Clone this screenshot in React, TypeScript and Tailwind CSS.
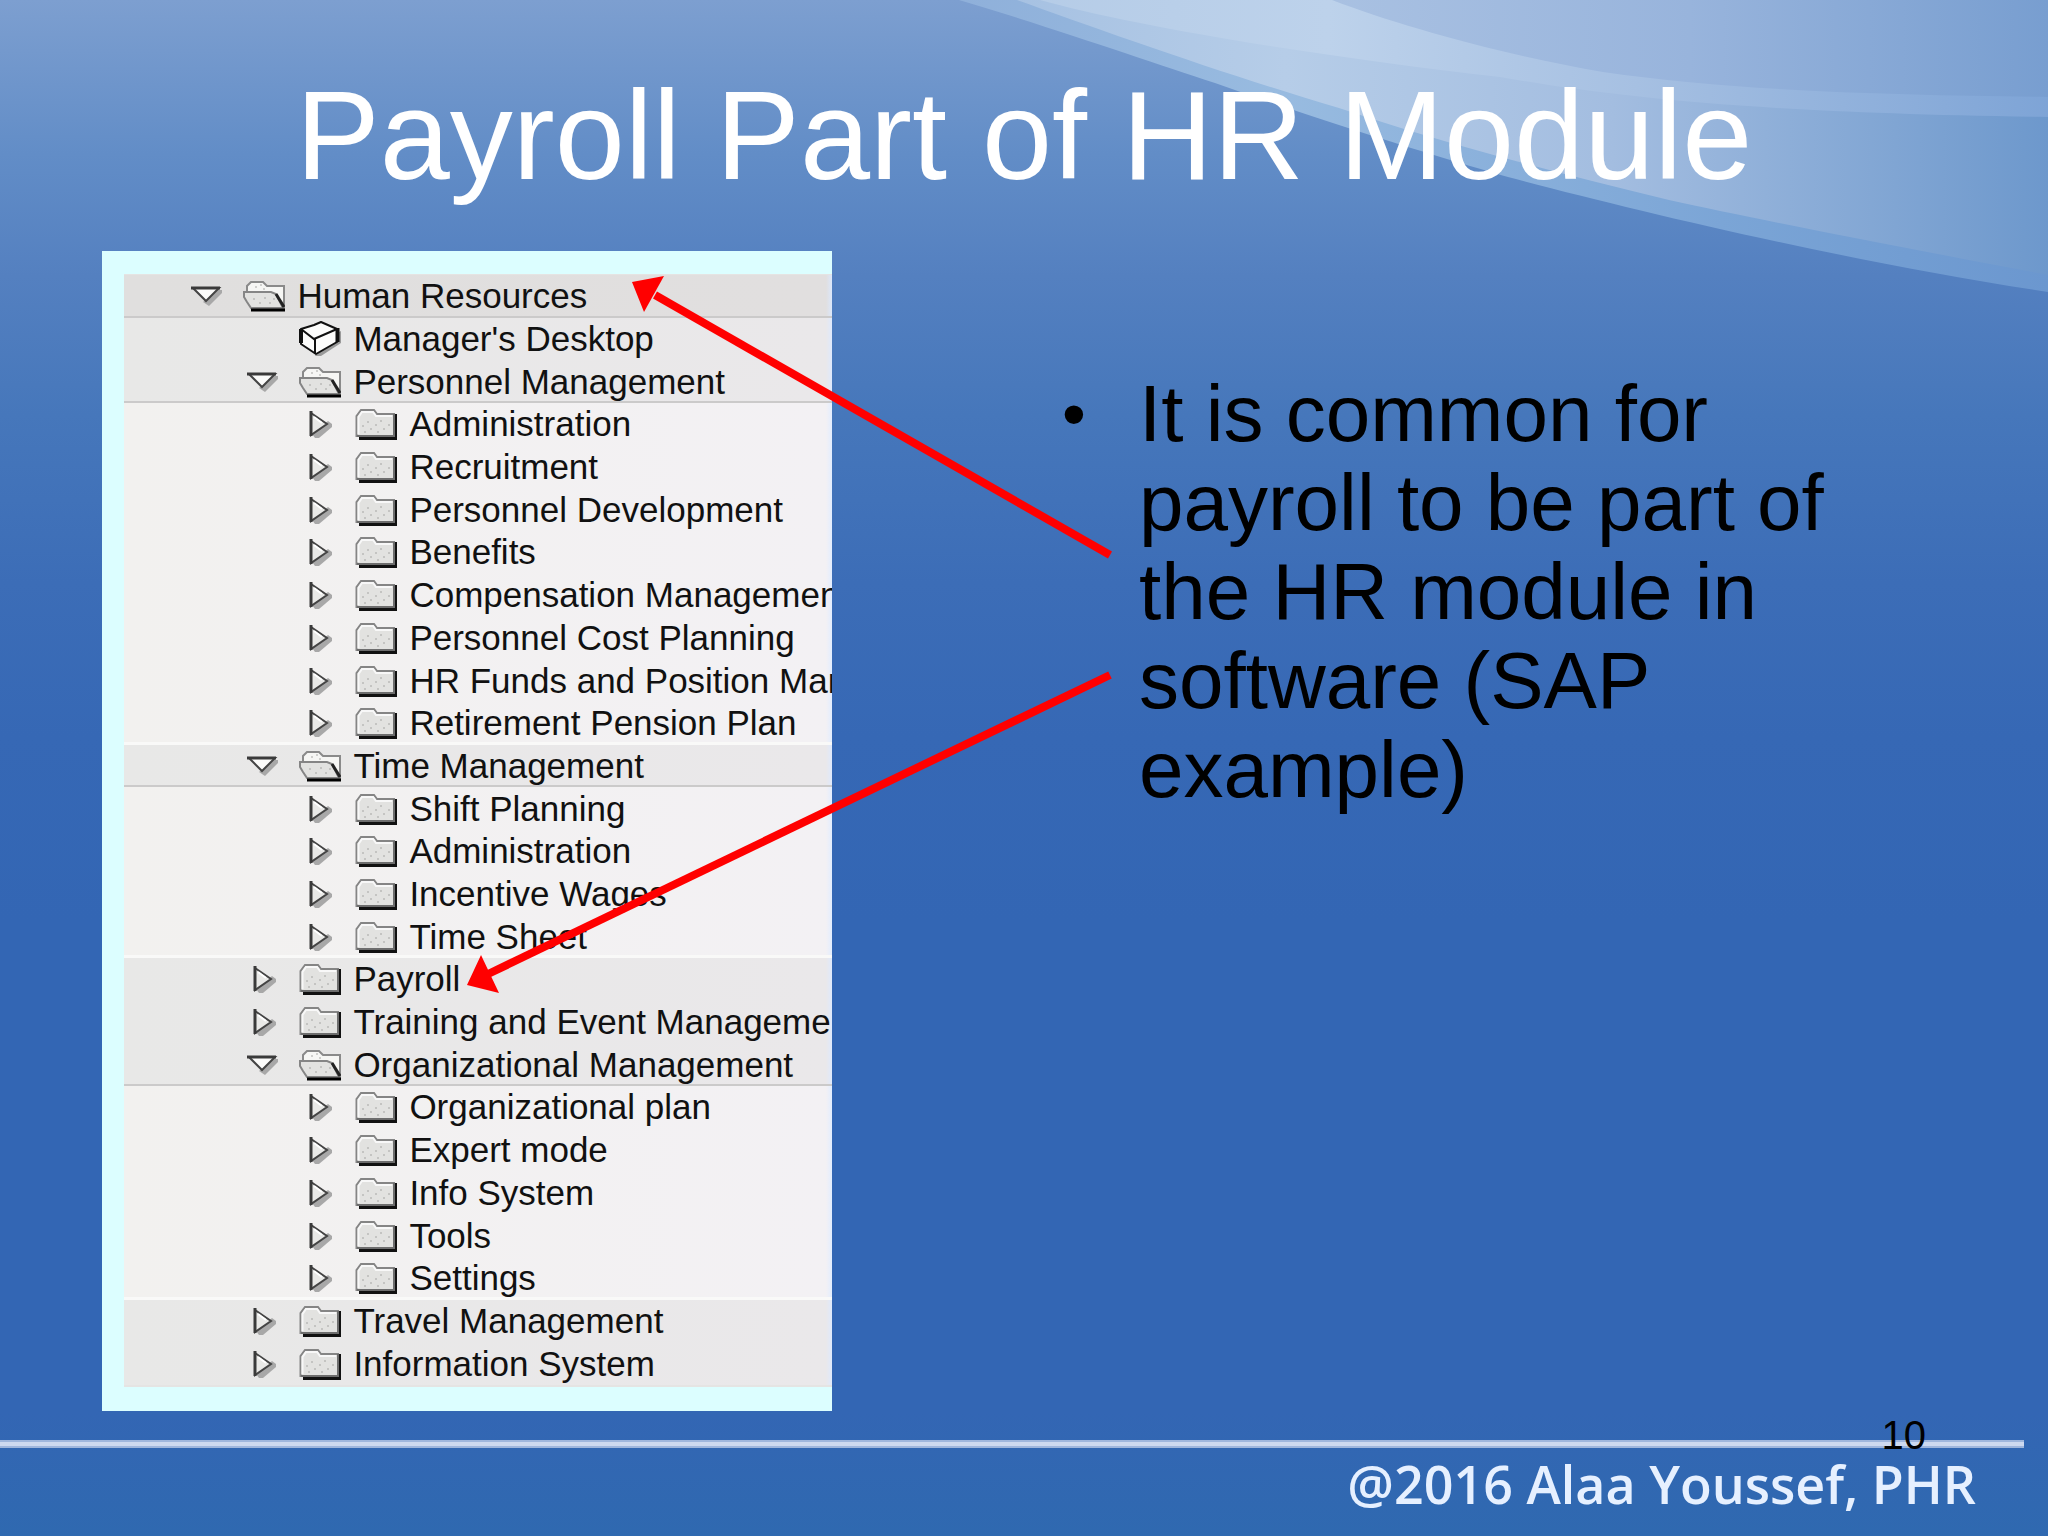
const levels = ['pl-[67px]', 'pl-[123px]', 'pl-[179px]'];

const tones = {
  root: 'shadow-[inset_0_-2px_#cbcaca] bg-[linear-gradient(to_right,#e0dfde,#e1dfdf_calc(100%-6px),#dbe7fb)]',
  mid: 'bg-[linear-gradient(to_right,#e8e8e7,#eae8ea_calc(100%-6px),#dee9fd)]',
  midEnd:
    'shadow-[inset_0_-2px_#cbcaca] bg-[linear-gradient(to_right,#e8e8e7,#eae8ea_calc(100%-6px),#dee9fd)]',
  leaf: 'bg-[linear-gradient(to_right,#f2f1ef,#f3f1f4_calc(100%-6px),#e2edff)]',
  leafEnd:
    'shadow-[inset_0_-3px_#f9f9f8] bg-[linear-gradient(to_right,#f2f1ef,#f3f1f4_calc(100%-6px),#e2edff)]',
};

type Item = {
  label: string;
  level: number;
  icon: 'open' | 'closed' | 'box';
  tone: keyof typeof tones;
};

const items: Item[] = [
  { label: 'Human Resources', level: 0, icon: 'open', tone: 'root' },
  { label: "Manager's Desktop", level: 1, icon: 'box', tone: 'mid' },
  { label: 'Personnel Management', level: 1, icon: 'open', tone: 'midEnd' },
  { label: 'Administration', level: 2, icon: 'closed', tone: 'leaf' },
  { label: 'Recruitment', level: 2, icon: 'closed', tone: 'leaf' },
  { label: 'Personnel Development', level: 2, icon: 'closed', tone: 'leaf' },
  { label: 'Benefits', level: 2, icon: 'closed', tone: 'leaf' },
  { label: 'Compensation Management', level: 2, icon: 'closed', tone: 'leaf' },
  { label: 'Personnel Cost Planning', level: 2, icon: 'closed', tone: 'leaf' },
  { label: 'HR Funds and Position Management', level: 2, icon: 'closed', tone: 'leaf' },
  { label: 'Retirement Pension Plan', level: 2, icon: 'closed', tone: 'leafEnd' },
  { label: 'Time Management', level: 1, icon: 'open', tone: 'midEnd' },
  { label: 'Shift Planning', level: 2, icon: 'closed', tone: 'leaf' },
  { label: 'Administration', level: 2, icon: 'closed', tone: 'leaf' },
  { label: 'Incentive Wages', level: 2, icon: 'closed', tone: 'leaf' },
  { label: 'Time Sheet', level: 2, icon: 'closed', tone: 'leafEnd' },
  { label: 'Payroll', level: 1, icon: 'closed', tone: 'mid' },
  { label: 'Training and Event Management', level: 1, icon: 'closed', tone: 'mid' },
  { label: 'Organizational Management', level: 1, icon: 'open', tone: 'midEnd' },
  { label: 'Organizational plan', level: 2, icon: 'closed', tone: 'leaf' },
  { label: 'Expert mode', level: 2, icon: 'closed', tone: 'leaf' },
  { label: 'Info System', level: 2, icon: 'closed', tone: 'leaf' },
  { label: 'Tools', level: 2, icon: 'closed', tone: 'leaf' },
  { label: 'Settings', level: 2, icon: 'closed', tone: 'leafEnd' },
  { label: 'Travel Management', level: 1, icon: 'closed', tone: 'mid' },
  { label: 'Information System', level: 1, icon: 'closed', tone: 'mid' },
];

function Toggle({ open }: { open: boolean }) {
  if (open) {
    return (
      <svg viewBox="0 0 32 24" className="w-8 h-6" aria-hidden="true">
        <path d="M26 6H31V9L18 22L12 18Z" fill="#a8a8a8" />
        <path d="M2 4H28L15 17Z" fill="#fbfbfa" stroke="#444" strokeWidth="2" />
        <path d="M0 4H29" stroke="#3a3a3a" strokeWidth="3" />
      </svg>
    );
  }
  return (
    <svg viewBox="0 0 32 28" className="w-8 h-7" aria-hidden="true">
      <path d="M25 11L29 14V17L16 28H12L9 24Z" fill="#a8a8a8" />
      <path d="M8 3L24 14L8 25Z" fill="#e9e9e7" stroke="#444" strokeWidth="2" />
      <path d="M11 7L19 13" stroke="#fff" strokeWidth="2" />
      <path d="M8 1V26" stroke="#3a3a3a" strokeWidth="3" />
    </svg>
  );
}

function ClosedFolder() {
  return (
    <svg viewBox="0 0 42 32" className="w-[42px] h-8 shrink-0" aria-hidden="true">
      <path d="M4 32H42V6H38V27H4Z" fill="#111" />
      <path
        d="M1.5 28V8L6 2H19L22 6H39V28Z"
        fill="#e2e2e0"
        stroke="#858585"
        strokeWidth="2"
      />
      <path d="M3.5 26V9L7 4H18L21 8H37" fill="none" stroke="#f8f8f8" strokeWidth="2" />
      <path d="M39 6V28H2" fill="none" stroke="#6d6d6d" strokeWidth="2" />
      <path
        d="M7 18h2M12 14h2M15 21h2M20 17h2M25 13h2M28 21h2M33 17h2M9 24h2M22 24h2"
        stroke="#c4c4c2"
        strokeWidth="2"
      />
    </svg>
  );
}

function OpenFolder() {
  return (
    <svg viewBox="0 0 42 32" className="w-[42px] h-8 shrink-0" aria-hidden="true">
      <path d="M4 12V6L8 2H20L24 6H41V28H34" fill="#f6f6f4" stroke="#8a8a8a" strokeWidth="2" />
      <path d="M12 7h2M17 5h2M20 9h2" stroke="#cfcfcd" strokeWidth="2" />
      <path
        d="M1 12H28L33 14L40 28H8L4 22L1 17Z"
        fill="#e2e2e0"
        stroke="#858585"
        strokeWidth="2"
      />
      <path d="M10 19h2M16 23h2M21 18h2M26 23h2M30 19h2" stroke="#c4c4c2" strokeWidth="2" />
      <path d="M33 14L41 27" stroke="#222" strokeWidth="3" />
      <path d="M8 30H42" stroke="#000" strokeWidth="3" />
    </svg>
  );
}

function BoxIcon() {
  return (
    <svg viewBox="0 0 42 36" className="w-[42px] h-9 shrink-0" aria-hidden="true">
      <path d="M16 35H22L42 22V10L38 12L19 30Z" fill="#9a9a9a" />
      <path
        d="M2 8L15 4L22 1L38 8V21L17 33L2 23Z"
        fill="#fcfcfb"
        stroke="#111"
        strokeWidth="2"
        strokeLinejoin="round"
      />
      <path d="M2 8L15 18L38 8M16 18V33" fill="none" stroke="#111" strokeWidth="2" />
      <path d="M38.5 7V21M2 8V22" stroke="#111" strokeWidth="4" />
    </svg>
  );
}

function TreeRow({ item }: { item: Item }) {
  return (
    <li
      className={`flex min-w-0 items-center overflow-hidden whitespace-nowrap ${levels[item.level]} ${tones[item.tone]}`}
    >
      <span className="w-[52px] shrink-0">
        {item.icon !== 'box' && <Toggle open={item.icon === 'open'} />}
      </span>
      {item.icon === 'open' && <OpenFolder />}
      {item.icon === 'closed' && <ClosedFolder />}
      {item.icon === 'box' && <BoxIcon />}
      <span className="ml-3 text-[35px] leading-10 text-[#111]">{item.label}</span>
    </li>
  );
}

function Swoosh() {
  return (
    <svg
      viewBox="0 0 2048 320"
      preserveAspectRatio="none"
      className="absolute inset-x-0 top-0 h-80 w-full"
      aria-hidden="true"
    >
      <defs>
        <linearGradient id="edge" x1="959" x2="2048" y1="0" y2="0" gradientUnits="userSpaceOnUse">
          <stop offset="0" stopColor="#8fb0da" />
          <stop offset="0.3" stopColor="#98bbe0" />
          <stop offset="0.7" stopColor="#7ba5d6" />
          <stop offset="1" stopColor="#6b97cf" />
        </linearGradient>
        <linearGradient id="band" x1="959" x2="2048" y1="0" y2="0" gradientUnits="userSpaceOnUse">
          <stop offset="0" stopColor="#a3bfe1" />
          <stop offset="0.3" stopColor="#b6cde8" />
          <stop offset="0.6" stopColor="#a3bde0" />
          <stop offset="1" stopColor="#6d98cc" />
        </linearGradient>
        <linearGradient id="ribbon" x1="1020" x2="2048" y1="0" y2="0" gradientUnits="userSpaceOnUse">
          <stop offset="0" stopColor="#b5cce7" />
          <stop offset="0.3" stopColor="#bdd2eb" />
          <stop offset="0.6" stopColor="#a6c0e2" />
          <stop offset="1" stopColor="#7ea4d6" />
        </linearGradient>
        <linearGradient id="sky" x1="1332" x2="2048" y1="0" y2="0" gradientUnits="userSpaceOnUse">
          <stop offset="0" stopColor="#a9c1e2" />
          <stop offset="0.5" stopColor="#98b4dc" />
          <stop offset="1" stopColor="#789ed0" />
        </linearGradient>
      </defs>
      <path
        d="M959 0C1060 30 1150 62 1215 83C1300 113 1420 152 1508 177C1640 212 1850 262 2048 292V0Z"
        fill="url(#edge)"
      />
      <path
        d="M1017 0C1100 30 1230 76 1339 108C1440 142 1560 174 1669 200C1760 220 1880 243 2048 275V0Z"
        fill="url(#band)"
      />
      <path
        d="M1040 0C1130 25 1300 54 1500 77C1620 98 1760 113 2048 117V0Z"
        fill="url(#ribbon)"
      />
      <path d="M1332 0C1400 26 1500 54 1603 72C1740 92 1900 95 2048 97V0Z" fill="url(#sky)" />
    </svg>
  );
}

// Red pointers from the note to the two tree entries
function Pointers() {
  return (
    <svg viewBox="0 0 2048 1536" className="absolute left-0 top-0 w-full" aria-hidden="true">
      <g stroke="#f00" strokeWidth="8">
        <path d="M1110 555L655 295" />
        <path d="M1110 675L486 975" />
      </g>
      <path d="M632 282L664 276L644 312Z" fill="#f00" />
      <path d="M467 985L481 955L499 993Z" fill="#f00" />
    </svg>
  );
}

export default function App() {
  return (
    <main className="relative flex min-h-screen flex-col overflow-hidden bg-[linear-gradient(to_bottom,#7d9fd0_0%,#628dc7_10%,#5480c0_18%,#4677bb_27%,#3c6db7_38%,#3668b5_48%,#3366b4_60%,#3366b4_92%,#2f69b0_100%)] font-['Liberation_Sans',Arial,sans-serif]">
      <Swoosh />

      <h1 className="relative pt-16 text-center text-[126px] leading-[144px] text-white">
        Payroll Part of HR Module
      </h1>

      <div className="relative mt-[43px] flex items-start pl-[5%]">
        <section className="w-[37.5%] shrink-0 bg-[#dcfeff] pt-[23px] pb-6 pl-[22px]">
          <ul className="grid h-[1113px] auto-rows-fr bg-[#e5e4e3] pt-px pb-0.5">
            {items.map((item, i) => (
              <TreeRow key={i} item={item} />
            ))}
          </ul>
        </section>

        <ul className="ml-[230px] mt-[118px] w-[780px] list-none">
          <li className="flex text-[80px] leading-[89px] text-black">
            <span className="w-[77px] shrink-0 text-[68px]">•</span>
            <span>It is common for payroll to be part of the HR module in software (SAP example)</span>
          </li>
        </ul>
      </div>

      <footer className="relative mt-[29px]">
        <div className="mr-6 h-2 border-y-2 border-[#9fb6dd] bg-[#cdd9f0]" />
        <div className="pr-[72px] pt-1.5 text-right font-['Open_Sans','Noto_Sans',sans-serif] text-[52px] leading-[60px] font-semibold text-[#e6f0ff]">
          @2016 Alaa Youssef, PHR
        </div>
        <span className="absolute -top-7 right-[122px] text-[40px] leading-[46px] text-black">10</span>
      </footer>

      <Pointers />
    </main>
  );
}
